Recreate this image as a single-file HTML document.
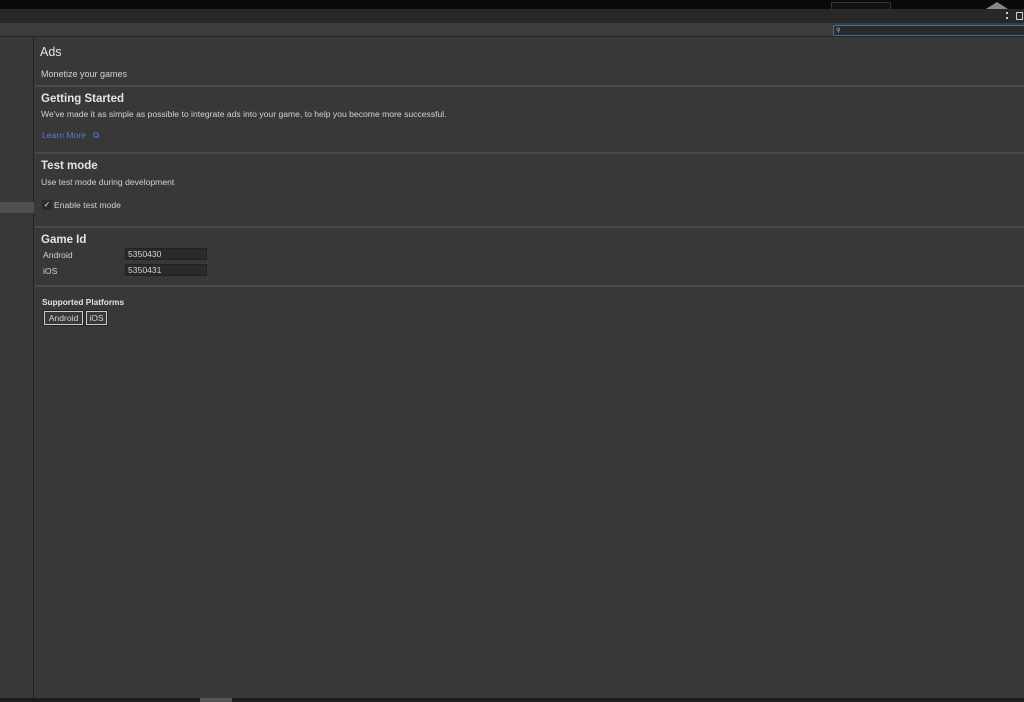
<!DOCTYPE html>
<html><head><style>
*{margin:0;padding:0;box-sizing:border-box}
body{width:1024px;height:702px;background:#383838;font-family:"Liberation Sans",sans-serif;color:#d2d2d2;position:relative;overflow:hidden;font-size:9px}
.a{position:absolute}
.sep{position:absolute;left:35px;right:0;height:2px;background:#4a4a4a}
h{position:absolute;font-weight:bold;color:#e4e4e4}
</style></head><body>
<div class="a" style="left:0;top:0;width:1024px;height:9px;background:#0a0a0a"></div>
<div class="a" style="left:831px;top:2px;width:60px;height:7px;border:1px solid #333;border-bottom:none;background:#111"></div>
<div class="a" style="left:986px;top:2px;width:0;height:0;border-left:11px solid transparent;border-right:11px solid transparent;border-bottom:7px solid #888"></div>
<div class="a" style="left:0;top:9px;width:1024px;height:14px;background:#282828"></div>
<div class="a" style="left:1006px;top:12px;width:1px;height:7px;border-left:2px dotted #ccc"></div>
<div class="a" style="left:1016px;top:12px;width:7px;height:8px;border:1px solid #ccc"></div>
<div class="a" style="left:0;top:23px;width:1024px;height:14px;background:#3c3c3c;border-bottom:1px solid #232323"></div>
<div class="a" style="left:833px;top:25px;width:195px;height:11px;background:#2a2a2a;border:1px solid #3a72b0;border-radius:2px"></div>
<div class="a" style="left:836px;top:27px;font-size:6px;color:#ccc">⚲</div>
<div class="a" style="left:0;top:38px;width:34px;height:660px;background:#383838;border-right:1px solid #222"></div>
<div class="a" style="left:0;top:202px;width:34px;height:11px;background:#4f4f4f"></div>
<div class="a" style="left:40px;top:45px;font-size:12.5px;color:#e4e4e4">Ads</div>
<div class="a" style="left:41px;top:69px">Monetize your games</div>
<div class="sep" style="top:85px"></div>
<h style="left:41px;top:93px;font-size:11.5px">Getting Started</h>
<div class="a" style="left:41px;top:109px;font-size:8.6px">We've made it as simple as possible to integrate ads into your game, to help you become more successful.</div>
<div class="a" style="left:42px;top:130px;color:#4d7fd8;font-size:8.6px">Learn More &nbsp;&nbsp;⧉</div>
<div class="sep" style="top:152px"></div>
<h style="left:41px;top:160px;font-size:11.5px">Test mode</h>
<div class="a" style="left:41px;top:177px;font-size:8.6px">Use test mode during development</div>
<div class="a" style="left:42px;top:200px;width:10px;height:10px;background:#2b2b2b;color:#eee;font-size:8px;text-align:center;line-height:10px">✓</div>
<div class="a" style="left:54px;top:200px;font-size:8.6px">Enable test mode</div>
<div class="sep" style="top:226px"></div>
<h style="left:41px;top:234px;font-size:11.5px">Game Id</h>
<div class="a" style="left:43px;top:250px;font-size:8.6px">Android</div>
<div class="a" style="left:125px;top:248px;width:82px;height:12px;background:#2a2a2a;border:1px solid #212121;font-size:8.6px;padding-left:2px;line-height:10px">5350430</div>
<div class="a" style="left:43px;top:266px;font-size:8.6px">iOS</div>
<div class="a" style="left:125px;top:264px;width:82px;height:12px;background:#2a2a2a;border:1px solid #212121;font-size:8.6px;padding-left:2px;line-height:10px">5350431</div>
<div class="sep" style="top:285px"></div>
<h style="left:42px;top:297px;font-size:8.3px">Supported Platforms</h>
<div class="a" style="left:44px;top:311px;width:39px;height:14px;border:1px solid #ccc;outline:1px solid #222;font-size:8.6px;text-align:center;line-height:12px">Android</div>
<div class="a" style="left:86px;top:311px;width:21px;height:14px;border:1px solid #ccc;outline:1px solid #222;font-size:8.6px;text-align:center;line-height:12px">iOS</div>
<div class="a" style="left:0;top:698px;width:1024px;height:4px;background:#1c1c1c"></div>
<div class="a" style="left:200px;top:698px;width:32px;height:4px;background:#555"></div>
</body></html>
